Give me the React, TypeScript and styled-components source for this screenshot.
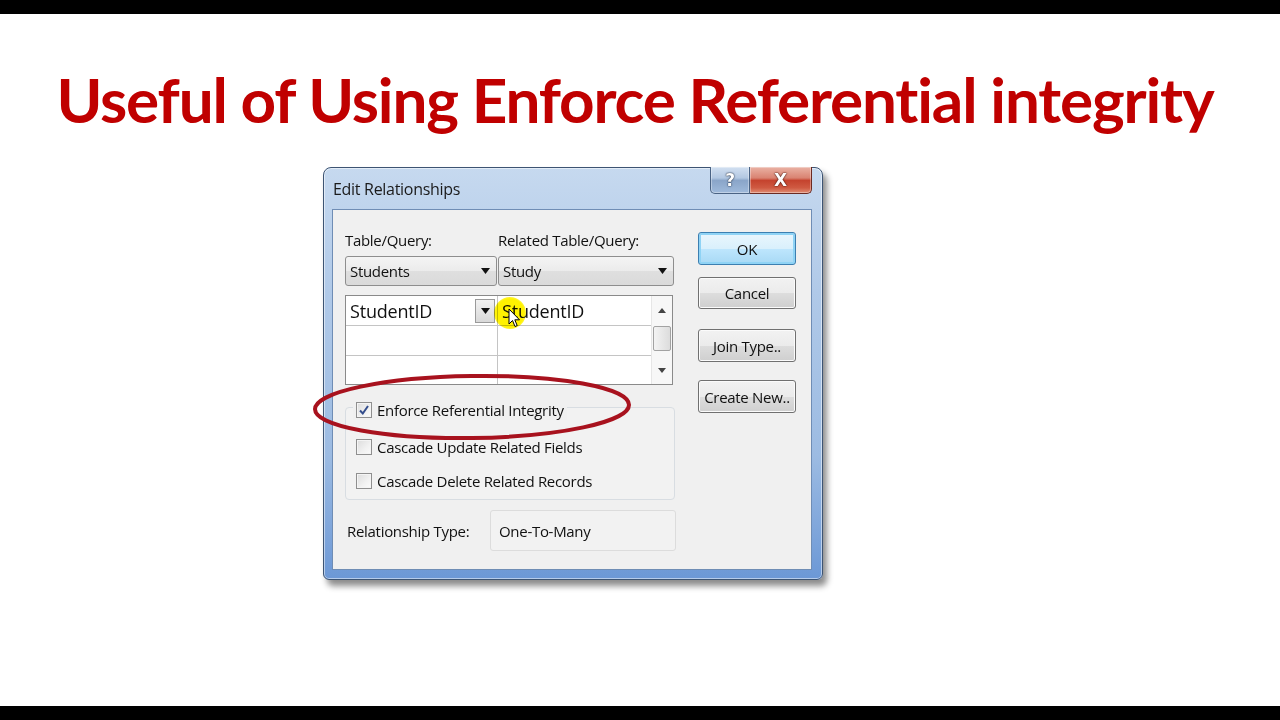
import styled, { createGlobalStyle } from "styled-components";

const GlobalStyle = createGlobalStyle`
  html, body {
    margin: 0;
    padding: 0;
    background: #fff;
    overflow: hidden;
  }
  * {
    box-sizing: border-box;
  }
`;

const Page = styled.div`
  width: 1280px;
  height: 720px;
  display: flex;
  flex-direction: column;
  background: #fff;
`;

const BlackBar = styled.div<{ $h: number }>`
  flex: none;
  height: ${(p) => p.$h}px;
  background: #000;
`;

const Stage = styled.main`
  flex: 1;
  display: flex;
  flex-direction: column;
`;

const Heading = styled.h1`
  margin: 54px 0 0;
  padding-right: 10px;
  height: 62px;
  line-height: 62px;
  text-align: center;
  white-space: nowrap;
  font-family: Lato, "Open Sans", sans-serif;
  font-weight: 700;
  font-size: 62px;
  letter-spacing: -1.15px;
  font-variant-ligatures: none;
  color: #c00000;
`;

const Window = styled.section`
  position: relative;
  margin: 37px 0 0 323px;
  width: 500px;
  height: 413px;
  display: flex;
  flex-direction: column;
  padding: 0 10px 9px 8px;
  border: 1px solid #3d5473;
  border-radius: 8px 8px 6px 6px;
  background: linear-gradient(180deg, #c6d9ef 0%, #b0c9e8 30%, #9cbbe2 70%, #6c98d6 100%);
  box-shadow: 4px 6px 6px rgba(0, 0, 0, 0.45), inset 0 0 0 1px rgba(255, 255, 255, 0.5);
  font-family: "Open Sans", "Noto Sans", sans-serif;
  font-size: 15px;
  letter-spacing: -0.3px;
  color: #111;
`;

const TitleBar = styled.header`
  flex: none;
  height: 41px;
  display: flex;
  justify-content: space-between;
  align-items: flex-start;
`;

const Caption = styled.span`
  margin: 11px 0 0 1px;
  line-height: 20px;
  font-size: 16px;
  color: #1b1b1b;
`;

const CaptionButtons = styled.div`
  display: flex;
  margin-top: -1px;
`;

const CaptionButton = styled.div<{ $close?: boolean }>`
  width: ${(p) => (p.$close ? 62 : 40)}px;
  height: 27px;
  display: flex;
  align-items: center;
  justify-content: center;
  font-family: "DejaVu Sans", sans-serif;
  font-weight: 700;
  font-size: 17px;
  color: #fff;
  text-shadow: 0 0 2px ${(p) => (p.$close ? "#5a1408" : "#283c5a")}, 0 0 1px #000;
  border: 1px solid ${(p) => (p.$close ? "#6b2a22" : "#4a6384")};
  border-top: none;
  ${(p) => (p.$close ? "border-left: none;" : "")}
  border-radius: ${(p) => (p.$close ? "0 0 5px 0" : "0 0 0 5px")};
  background: ${(p) =>
    p.$close
      ? "linear-gradient(180deg, #eab2a4 0%, #d98372 42%, #c5432e 52%, #cf5a42 80%, #e08d74 100%)"
      : "linear-gradient(180deg, #d2e0f1 0%, #b3c8e2 42%, #8aa5c9 52%, #9fbadb 100%)"};
  box-shadow: inset 0 0 0 1px rgba(255, 255, 255, 0.35);
`;

const Client = styled.div`
  flex: 1;
  background: #f0f0f0;
  border: 1px solid #6f8db5;
  display: grid;
  grid-template-columns: 331px 98px;
  column-gap: 22px;
  align-items: start;
  padding: 20px 0 0 12px;
`;

const LeftColumn = styled.div`
  display: flex;
  flex-direction: column;
`;

const LabelRow = styled.div`
  display: grid;
  grid-template-columns: 153px 1fr;
  height: 20px;
  line-height: 20px;
`;

const ComboRow = styled.div`
  display: grid;
  grid-template-columns: 152px 176px;
  column-gap: 1px;
  margin-top: 6px;
  height: 30px;
`;

const Combo = styled.div`
  display: flex;
  align-items: center;
  justify-content: space-between;
  padding: 0 6px 0 4px;
  border: 1px solid #8e8e8e;
  border-radius: 3px;
  background: linear-gradient(180deg, #f4f4f4 0%, #ebebeb 50%, #dfdfdf 51%, #dadada 100%);
`;

const Arrow = ({ up }: { up?: boolean }) => (
  <svg width="9" height="6" viewBox="0 0 9 6">
    <path d={up ? "M0 6 L4.5 0 L9 6 Z" : "M0 0 L9 0 L4.5 6 Z"} fill="#111" />
  </svg>
);

const SmallArrow = ({ up }: { up?: boolean }) => (
  <svg width="8" height="5" viewBox="0 0 8 5">
    <path d={up ? "M0 5 L4 0 L8 5 Z" : "M0 0 L8 0 L4 5 Z"} fill="#444" />
  </svg>
);

const DataGrid = styled.div`
  margin-top: 9px;
  width: 328px;
  height: 90px;
  border: 1px solid #8a8a8a;
  background: #fff;
  display: grid;
  grid-template-columns: 152px 1fr 21px;
  grid-template-rows: 30px 30px 1fr;
`;

const Cell = styled.div<{ $first?: boolean; $last?: boolean }>`
  display: flex;
  align-items: center;
  justify-content: space-between;
  padding: 0 2px 0 4px;
  font-size: 18px;
  letter-spacing: -0.2px;
  border-right: ${(p) => (p.$first ? "1px solid #c4c4c4" : "none")};
  border-bottom: ${(p) => (p.$last ? "none" : "1px solid #c4c4c4")};
`;

const DropButton = styled.div`
  width: 20px;
  height: 24px;
  display: flex;
  align-items: center;
  justify-content: center;
  border: 1px solid #9a9a9a;
  background: linear-gradient(180deg, #f2f2f2, #d9d9d9);
`;

const ScrollBar = styled.div`
  grid-column: 3;
  grid-row: 1 / span 3;
  display: flex;
  flex-direction: column;
  align-items: center;
  background: #f7f7f7;
  border-left: 1px solid #e6e6e6;
`;

const ScrollArrow = styled.div`
  height: 28px;
  width: 100%;
  display: flex;
  align-items: center;
  justify-content: center;
`;

const Thumb = styled.div`
  width: 18px;
  height: 25px;
  margin-top: 2px;
  border: 1px solid #a2a2a2;
  border-radius: 2px;
  background: linear-gradient(90deg, #f3f3f3, #dcdcdc);
`;

const Spacer = styled.div`
  flex: 1;
`;

const GroupBox = styled.div`
  margin-top: 22px;
  width: 330px;
  border: 1px solid #d8dde2;
  border-radius: 4px;
  padding: 0 0 8px 10px;
  display: flex;
  flex-direction: column;
  background: #f2f2f2;
`;

const CheckRow = styled.label<{ $top: number; $legend?: boolean }>`
  display: flex;
  align-items: center;
  gap: 5px;
  height: 20px;
  margin-top: ${(p) => p.$top}px;
  align-self: flex-start;
  ${(p) => (p.$legend ? "background: #f0f0f0; padding: 0 3px; margin-left: -3px;" : "")}
`;

const Box = styled.span`
  width: 16px;
  height: 16px;
  display: flex;
  align-items: center;
  justify-content: center;
  border: 1px solid #8f8f8f;
  background: linear-gradient(135deg, #dcdcdc 0%, #f1f1f1 60%, #fbfbfb 100%);
  box-shadow: inset 0 0 0 1px #f4f4f4;
`;

const CheckBox = ({ checked }: { checked?: boolean }) => (
  <Box>
    {checked && (
      <svg width="12" height="12" viewBox="0 0 12 12">
        <path d="M2 6.5 L4.8 9.5 L10 2" fill="none" stroke="#334d8c" strokeWidth="2" />
      </svg>
    )}
  </Box>
);

const TypeRow = styled.div`
  margin-top: 10px;
  height: 41px;
  display: grid;
  grid-template-columns: 145px 186px;
  align-items: center;
`;

const TypeLabel = styled.span`
  padding-left: 2px;
`;

const TypeValue = styled.div`
  height: 41px;
  display: flex;
  align-items: center;
  padding-left: 8px;
  border: 1px solid #dcdcdc;
  border-radius: 3px;
  background: #f2f2f2;
`;

const ButtonColumn = styled.div`
  display: flex;
  flex-direction: column;
  padding-top: 2px;
`;

const PushButton = styled.div<{ $top: number; $h?: number; $default?: boolean }>`
  width: 98px;
  height: ${(p) => p.$h ?? 33}px;
  margin-top: ${(p) => p.$top}px;
  display: flex;
  align-items: center;
  justify-content: center;
  white-space: nowrap;
  border: 1px solid ${(p) => (p.$default ? "#3c7fb1" : "#707070")};
  border-radius: 3px;
  background: ${(p) =>
    p.$default
      ? "linear-gradient(180deg, #eaf6fd 0%, #d9f0fc 50%, #bee6fd 51%, #a7d9f5 100%)"
      : "linear-gradient(180deg, #f2f2f2 0%, #ebebeb 50%, #dddddd 51%, #cfcfcf 100%)"};
  box-shadow: inset 0 0 0 ${(p) => (p.$default ? "2px #8fd3f5" : "1px #fbfbfb")};
`;

const Ellipse = styled.svg`
  position: absolute;
  left: -13px;
  top: 205px;
  pointer-events: none;
`;

const Highlight = styled.div`
  position: absolute;
  left: 170px;
  top: 129px;
  width: 32px;
  height: 32px;
  border-radius: 50%;
  background: radial-gradient(circle, #fff200 0%, #fff200 62%, rgba(255, 242, 0, 0.4) 85%, rgba(255, 242, 0, 0) 100%);
  mix-blend-mode: multiply;
  pointer-events: none;
`;

const Cursor = styled.svg`
  position: absolute;
  left: 184px;
  top: 140px;
  pointer-events: none;
`;

export default function App() {
  return (
    <Page>
      <GlobalStyle />
      <BlackBar $h={14} />
      <Stage>
        <Heading>Useful of Using Enforce Referential integrity</Heading>
        <Window>
          <TitleBar>
            <Caption>Edit Relationships</Caption>
            <CaptionButtons>
              <CaptionButton>?</CaptionButton>
              <CaptionButton $close>X</CaptionButton>
            </CaptionButtons>
          </TitleBar>
          <Client>
            <LeftColumn>
              <LabelRow>
                <span>Table/Query:</span>
                <span>Related Table/Query:</span>
              </LabelRow>
              <ComboRow>
                <Combo>
                  Students
                  <Arrow />
                </Combo>
                <Combo>
                  Study
                  <Arrow />
                </Combo>
              </ComboRow>
              <DataGrid>
                <Cell $first>
                  StudentID
                  <DropButton>
                    <Arrow />
                  </DropButton>
                </Cell>
                <Cell>StudentID</Cell>
                <ScrollBar>
                  <ScrollArrow>
                    <SmallArrow up />
                  </ScrollArrow>
                  <Thumb />
                  <Spacer />
                  <ScrollArrow>
                    <SmallArrow />
                  </ScrollArrow>
                </ScrollBar>
                <Cell $first />
                <Cell />
                <Cell $first $last />
                <Cell $last />
              </DataGrid>
              <GroupBox>
                <CheckRow $top={-8} $legend>
                  <CheckBox checked />
                  Enforce Referential Integrity
                </CheckRow>
                <CheckRow $top={17}>
                  <CheckBox />
                  Cascade Update Related Fields
                </CheckRow>
                <CheckRow $top={14}>
                  <CheckBox />
                  Cascade Delete Related Records
                </CheckRow>
              </GroupBox>
              <TypeRow>
                <TypeLabel>Relationship Type:</TypeLabel>
                <TypeValue>One-To-Many</TypeValue>
              </TypeRow>
            </LeftColumn>
            <ButtonColumn>
              <PushButton $top={0} $default>
                OK
              </PushButton>
              <PushButton $top={12} $h={32}>
                Cancel
              </PushButton>
              <PushButton $top={20}>Join Type..</PushButton>
              <PushButton $top={18}>Create New..</PushButton>
            </ButtonColumn>
          </Client>
          <Highlight />
          <Cursor width="13" height="21" viewBox="0 0 13 21">
            <path
              d="M1 1 L1 16 L4.5 12.5 L7 18.5 L9.2 17.6 L6.8 11.8 L11.5 11.8 Z"
              fill="#fff"
              stroke="#000"
              strokeWidth="1"
              strokeLinejoin="round"
            />
          </Cursor>
          <Ellipse width="322" height="68" viewBox="0 0 322 68">
            <ellipse
              cx="161"
              cy="34"
              rx="157"
              ry="31"
              fill="none"
              stroke="#a8121e"
              strokeWidth="4"
              transform="rotate(-0.8 161 34)"
            />
          </Ellipse>
        </Window>
      </Stage>
      <BlackBar $h={14} />
    </Page>
  );
}
